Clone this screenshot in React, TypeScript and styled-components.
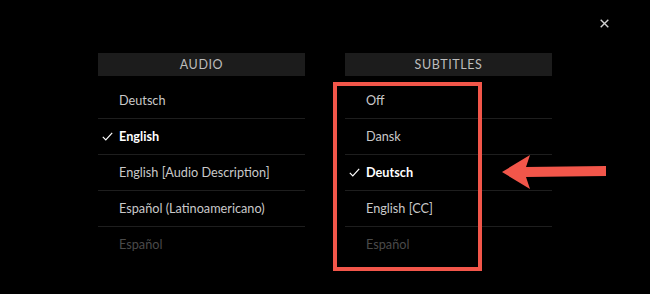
import React from "react";
import styled, { createGlobalStyle } from "styled-components";

const Global = createGlobalStyle`
  html, body { margin: 0; padding: 0; background: #000; }
  body { width: 650px; height: 294px; overflow: hidden; font-family: Lato, "Noto Sans", sans-serif; }
`;

const Screen = styled.div`
  position: relative;
  width: 650px;
  height: 294px;
  background: #000;
  display: flex;
  justify-content: center;
  padding-top: 53px;
  box-sizing: border-box;
`;

const Columns = styled.div`
  display: flex;
  gap: 40px;
`;

const Column = styled.div`
  width: 207px;
  display: flex;
  flex-direction: column;
`;

const Header = styled.div`
  height: 23px;
  background: #1c1c1c;
  color: #bdbdbd;
  font-size: 12.5px;
  letter-spacing: 0.6px;
  display: flex;
  align-items: center;
  justify-content: center;
`;

const List = styled.ul`
  list-style: none;
  margin: 7px 0 0;
  padding: 0;
`;

const Row = styled.li<{ $state: "normal" | "selected" | "dim" }>`
  position: relative;
  height: 36px;
  display: flex;
  align-items: center;
  padding-left: 21px;
  padding-bottom: 2px;
  box-sizing: border-box;
  font-size: 12.7px;
  border-bottom: 1px solid #1e1e1e;
  color: ${(p) => (p.$state === "dim" ? "#4a4a4a" : p.$state === "selected" ? "#ffffff" : "#c9c9c9")};
  font-weight: ${(p) => (p.$state === "selected" ? 700 : 400)};
  &:last-child { border-bottom: none; }
`;

const Check = styled.svg`
  position: absolute;
  left: 4px;
  top: 50%;
  margin-top: -5px;
  width: 11px;
  height: 9px;
`;

const Close = styled.svg`
  position: absolute;
  left: 600px;
  top: 19px;
  width: 9px;
  height: 9px;
`;

const Highlight = styled.div`
  position: absolute;
  left: 333px;
  top: 82px;
  width: 149px;
  height: 189px;
  box-sizing: border-box;
  border: 4px solid #f2564a;
  pointer-events: none;
`;

const Arrow = styled.svg`
  position: absolute;
  left: 500px;
  top: 154px;
  width: 108px;
  height: 36px;
`;

type Item = { label: string; state: "normal" | "selected" | "dim" };

const audio: Item[] = [
  { label: "Deutsch", state: "normal" },
  { label: "English", state: "selected" },
  { label: "English [Audio Description]", state: "normal" },
  { label: "Español (Latinoamericano)", state: "normal" },
  { label: "Español", state: "dim" },
];

const subs: Item[] = [
  { label: "Off", state: "normal" },
  { label: "Dansk", state: "normal" },
  { label: "Deutsch", state: "selected" },
  { label: "English [CC]", state: "normal" },
  { label: "Español", state: "dim" },
];

function Panel({ title, items }: { title: string; items: Item[] }) {
  return (
    <Column>
      <Header>{title}</Header>
      <List>
        {items.map((it) => (
          <Row key={it.label} $state={it.state}>
            {it.state === "selected" && (
              <Check viewBox="0 0 11 9">
                <path d="M0.8 4.8 L3.8 7.8 L10.2 0.8" fill="none" stroke="#fff" strokeWidth="1.2" />
              </Check>
            )}
            {it.label}
          </Row>
        ))}
      </List>
    </Column>
  );
}

export default function App() {
  return (
    <>
      <Global />
      <Screen>
        <Columns>
          <Panel title="AUDIO" items={audio} />
          <Panel title="SUBTITLES" items={subs} />
        </Columns>
        <Close viewBox="0 0 9 9">
          <path d="M0.7 0.7 L8.3 8.3 M8.3 0.7 L0.7 8.3" stroke="#d0d0d0" strokeWidth="1.4" />
        </Close>
        <Highlight />
        <Arrow viewBox="0 0 108 36">
          <polygon points="2,18 30,1 26,13 106,12 106,22 26,23 30,35" fill="#f2564a" />
        </Arrow>
      </Screen>
    </>
  );
}
